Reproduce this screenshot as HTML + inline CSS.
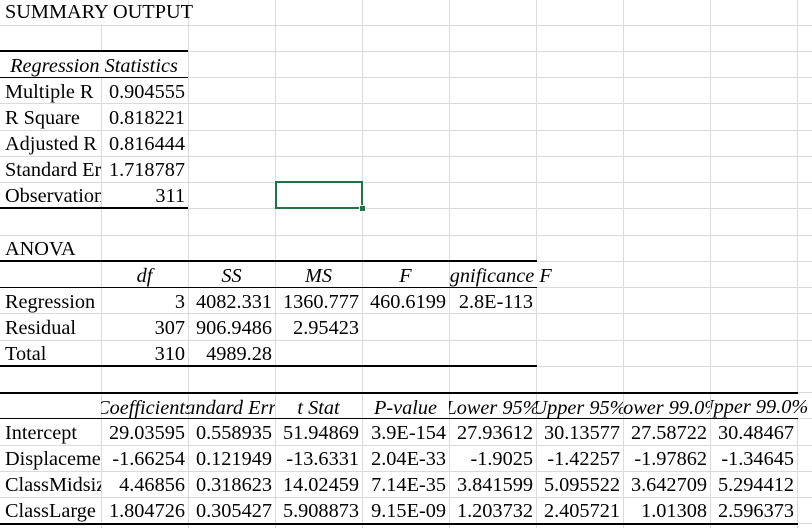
<!DOCTYPE html>
<html><head><meta charset="utf-8">
<style>
html,body{margin:0;padding:0;}
body{width:812px;height:528px;overflow:hidden;background:#fff;position:relative;font-family:"Liberation Serif","Times New Roman",serif;font-size:20.3px;color:#000;}
.v{position:absolute;top:0;height:528px;width:1px;background:#dadada;}
.h{position:absolute;left:0;width:812px;height:1px;background:#dadada;}
.b{position:absolute;height:2px;background:#000;}
.t{position:absolute;height:1px;background:#000;}
.c{position:absolute;height:26px;display:flex;align-items:center;white-space:nowrap;overflow:hidden;box-sizing:border-box;padding-top:3px;}
.l{justify-content:flex-start;padding-left:5px;}
.r{justify-content:flex-end;padding-right:3px;}
.m{justify-content:center;}
.i{font-style:italic;}
.w{background:#fff;}
</style></head><body>
<div class="v" style="left:101px"></div><div class="v" style="left:188px"></div><div class="v" style="left:275px"></div><div class="v" style="left:362px"></div><div class="v" style="left:449px"></div><div class="v" style="left:536px"></div><div class="v" style="left:623px"></div><div class="v" style="left:710px"></div><div class="v" style="left:797px"></div>
<div class="h" style="top:25px"></div><div class="h" style="top:51px"></div><div class="h" style="top:77px"></div><div class="h" style="top:103px"></div><div class="h" style="top:130px"></div><div class="h" style="top:156px"></div><div class="h" style="top:182px"></div><div class="h" style="top:208px"></div><div class="h" style="top:235px"></div><div class="h" style="top:261px"></div><div class="h" style="top:287px"></div><div class="h" style="top:313px"></div><div class="h" style="top:340px"></div><div class="h" style="top:366px"></div><div class="h" style="top:392px"></div><div class="h" style="top:418px"></div><div class="h" style="top:445px"></div><div class="h" style="top:471px"></div><div class="h" style="top:497px"></div><div class="h" style="top:523px"></div>

<div class="c l w" style="left:0;top:0;width:187px;height:24px;padding-top:1px;overflow:visible">SUMMARY OUTPUT</div>

<div class="c m i w" style="left:0;top:52px;width:188px;height:25px">Regression Statistics</div>
<div class="c l" style="left:0;top:78px;width:101px">Multiple R</div><div class="c r" style="left:101px;top:78px;width:87px">0.904555</div>
<div class="c l" style="left:0;top:104px;width:101px">R Square</div><div class="c r" style="left:101px;top:104px;width:87px">0.818221</div>
<div class="c l" style="left:0;top:130px;width:101px">Adjusted R Square</div><div class="c r" style="left:101px;top:130px;width:87px">0.816444</div>
<div class="c l" style="left:0;top:156px;width:101px">Standard Error</div><div class="c r" style="left:101px;top:156px;width:87px">1.718787</div>
<div class="c l" style="left:0;top:182px;width:101px">Observations</div><div class="c r" style="left:101px;top:182px;width:87px">311</div>

<div style="position:absolute;left:275px;top:181px;width:84px;height:24px;border:2px solid #217346"></div>
<div style="position:absolute;left:359px;top:205px;width:5px;height:5px;background:#217346;border:1px solid #fff"></div>

<div class="c l" style="left:0;top:235px;width:101px">ANOVA</div>
<div class="c m i" style="left:101px;top:262px;width:87px">df</div>
<div class="c m i" style="left:188px;top:262px;width:87px">SS</div>
<div class="c m i" style="left:275px;top:262px;width:87px">MS</div>
<div class="c m i" style="left:362px;top:262px;width:87px">F</div>
<div class="c i w" style="left:450px;top:262px;width:110px;height:25px;justify-content:flex-start;overflow:hidden"><span style="margin-left:-16px">Significance F</span></div>

<div class="c l" style="left:0;top:288px;width:101px">Regression</div><div class="c r" style="left:101px;top:288px;width:87px">3</div><div class="c r" style="left:188px;top:288px;width:87px">4082.331</div><div class="c r" style="left:275px;top:288px;width:87px">1360.777</div><div class="c r" style="left:362px;top:288px;width:87px">460.6199</div><div class="c r" style="left:449px;top:288px;width:87px">2.8E-113</div>
<div class="c l" style="left:0;top:314px;width:101px">Residual</div><div class="c r" style="left:101px;top:314px;width:87px">307</div><div class="c r" style="left:188px;top:314px;width:87px">906.9486</div><div class="c r" style="left:275px;top:314px;width:87px">2.95423</div>
<div class="c l" style="left:0;top:340px;width:101px">Total</div><div class="c r" style="left:101px;top:340px;width:87px">310</div><div class="c r" style="left:188px;top:340px;width:87px">4989.28</div>

<div class="c m i" style="left:101px;top:394px;width:87px">Coefficients</div>
<div class="c m i" style="left:188px;top:394px;width:87px">Standard Error</div>
<div class="c m i" style="left:275px;top:394px;width:87px">t Stat</div>
<div class="c m i" style="left:362px;top:394px;width:87px">P-value</div>
<div class="c m i" style="left:449px;top:394px;width:87px">Lower 95%</div>
<div class="c m i" style="left:536px;top:394px;width:87px">Upper 95%</div>
<div class="c m i" style="left:623px;top:394px;width:87px">Lower 99.0%</div>
<div class="c i w" style="left:711px;top:394px;width:101px;height:24px;justify-content:flex-start"><span style="margin-left:-12px">Upper 99.0%</span></div>

<div class="c l" style="left:0;top:419px;width:101px">Intercept</div><div class="c r" style="left:101px;top:419px;width:87px">29.03595</div><div class="c r" style="left:188px;top:419px;width:87px">0.558935</div><div class="c r" style="left:275px;top:419px;width:87px">51.94869</div><div class="c r" style="left:362px;top:419px;width:87px">3.9E-154</div><div class="c r" style="left:449px;top:419px;width:87px">27.93612</div><div class="c r" style="left:536px;top:419px;width:87px">30.13577</div><div class="c r" style="left:623px;top:419px;width:87px">27.58722</div><div class="c r" style="left:710px;top:419px;width:87px">30.48467</div>
<div class="c l" style="left:0;top:445px;width:101px">Displacement</div><div class="c r" style="left:101px;top:445px;width:87px">-1.66254</div><div class="c r" style="left:188px;top:445px;width:87px">0.121949</div><div class="c r" style="left:275px;top:445px;width:87px">-13.6331</div><div class="c r" style="left:362px;top:445px;width:87px">2.04E-33</div><div class="c r" style="left:449px;top:445px;width:87px">-1.9025</div><div class="c r" style="left:536px;top:445px;width:87px">-1.42257</div><div class="c r" style="left:623px;top:445px;width:87px">-1.97862</div><div class="c r" style="left:710px;top:445px;width:87px">-1.34645</div>
<div class="c l" style="left:0;top:471px;width:101px">ClassMidsize</div><div class="c r" style="left:101px;top:471px;width:87px">4.46856</div><div class="c r" style="left:188px;top:471px;width:87px">0.318623</div><div class="c r" style="left:275px;top:471px;width:87px">14.02459</div><div class="c r" style="left:362px;top:471px;width:87px">7.14E-35</div><div class="c r" style="left:449px;top:471px;width:87px">3.841599</div><div class="c r" style="left:536px;top:471px;width:87px">5.095522</div><div class="c r" style="left:623px;top:471px;width:87px">3.642709</div><div class="c r" style="left:710px;top:471px;width:87px">5.294412</div>
<div class="c l" style="left:0;top:497px;width:101px">ClassLarge</div><div class="c r" style="left:101px;top:497px;width:87px">1.804726</div><div class="c r" style="left:188px;top:497px;width:87px">0.305427</div><div class="c r" style="left:275px;top:497px;width:87px">5.908873</div><div class="c r" style="left:362px;top:497px;width:87px">9.15E-09</div><div class="c r" style="left:449px;top:497px;width:87px">1.203732</div><div class="c r" style="left:536px;top:497px;width:87px">2.405721</div><div class="c r" style="left:623px;top:497px;width:87px">1.01308</div><div class="c r" style="left:710px;top:497px;width:87px">2.596373</div>

<div class="b" style="left:0;top:50px;width:188px"></div>
<div class="t" style="left:0;top:77px;width:188px"></div>
<div class="b" style="left:0;top:207px;width:188px"></div>
<div class="b" style="left:0;top:260px;width:537px"></div>
<div class="t" style="left:0;top:287px;width:537px"></div>
<div class="b" style="left:0;top:365px;width:537px"></div>
<div class="b" style="left:0;top:392px;width:798px"></div>
<div class="t" style="left:0;top:418px;width:798px"></div>
<div class="b" style="left:0;top:523px;width:798px"></div>
</body></html>
